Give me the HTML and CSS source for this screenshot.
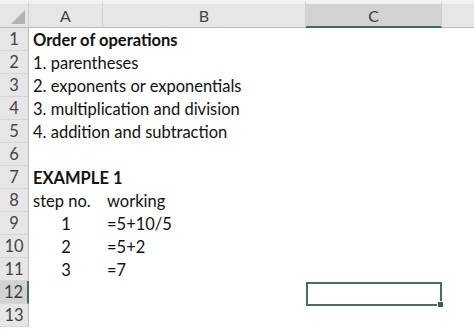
FILE: index.html
```html
<!DOCTYPE html>
<html lang="en">
<head>
    <meta charset="UTF-8">
    <title>Order of operations</title>
    <link rel="stylesheet" href="styles.css">
</head>
<body>
    <div class="sheet">
        <div class="corner"><span class="tri"></span></div>
        <div class="colhead">A</div>
        <div class="colhead">B</div>
        <div class="colhead active">C</div>
        <div class="colhead last"></div>

        <div class="rowhead">1</div><div class="cell bold">Order of operations</div><div class="cell"></div><div class="cell"></div><div class="cell"></div>
        <div class="rowhead">2</div><div class="cell">1. parentheses</div><div class="cell"></div><div class="cell"></div><div class="cell"></div>
        <div class="rowhead">3</div><div class="cell">2. exponents or exponentials</div><div class="cell"></div><div class="cell"></div><div class="cell"></div>
        <div class="rowhead">4</div><div class="cell">3. multiplication and division</div><div class="cell"></div><div class="cell"></div><div class="cell"></div>
        <div class="rowhead">5</div><div class="cell">4. addition and subtraction</div><div class="cell"></div><div class="cell"></div><div class="cell"></div>
        <div class="rowhead">6</div><div class="cell"></div><div class="cell"></div><div class="cell"></div><div class="cell"></div>
        <div class="rowhead">7</div><div class="cell bold">EXAMPLE 1</div><div class="cell"></div><div class="cell"></div><div class="cell"></div>
        <div class="rowhead">8</div><div class="cell">step no.</div><div class="cell">working</div><div class="cell"></div><div class="cell"></div>
        <div class="rowhead">9</div><div class="cell center">1</div><div class="cell">=5+10/5</div><div class="cell"></div><div class="cell"></div>
        <div class="rowhead">10</div><div class="cell center">2</div><div class="cell">=5+2</div><div class="cell"></div><div class="cell"></div>
        <div class="rowhead">11</div><div class="cell center">3</div><div class="cell">=7</div><div class="cell"></div><div class="cell"></div>
        <div class="rowhead active">12</div><div class="cell"></div><div class="cell"></div><div class="cell selected"><span class="handle"></span></div><div class="cell"></div>
        <div class="rowhead">13</div><div class="cell"></div><div class="cell"></div><div class="cell"></div><div class="cell"></div>
    </div>
</body>
</html>
```

FILE: styles.css
```css
body {
    margin: 0;
    background: #fff;
    font-family: Lato, "Liberation Sans", sans-serif;
    overflow: hidden;
}
.sheet {
    display: grid;
    grid-template-columns: 29px 74px 203px 136px 1fr;
    grid-template-rows: 28px repeat(13, 23px);
    width: 474px;
}
.corner, .colhead {
    background: #e6e6e6;
    border-top: 4px solid #f1f1f1;
    border-bottom: 1px solid #bcbcbc;
    box-sizing: border-box;
}
.corner {
    position: relative;
    border-right: 1px solid #d0d0d0;
}
.tri {
    position: absolute;
    right: 3px;
    bottom: 3px;
    width: 0;
    height: 0;
    border-left: 14px solid transparent;
    border-bottom: 14px solid #b4b4b4;
}
.colhead {
    display: flex;
    align-items: center;
    justify-content: center;
    color: #444;
    font-size: 16px;
    border-right: 1px solid #d0d0d0;
}
.colhead.active {
    background: #d2d2d2;
    border-bottom: 2px solid #3f6f5a;
    color: #3c3c3c;
}
.colhead.last {
    border-right: none;
}
.rowhead {
    display: flex;
    align-items: center;
    justify-content: center;
    background: #e6e6e6;
    color: #444;
    font-size: 16.5px;
    border-bottom: 1px solid #d6d6d6;
    border-right: 1px solid #bcbcbc;
    box-sizing: border-box;
}
.rowhead.active {
    background: #d2d2d2;
    border-right: 2px solid #3f6f5a;
    color: #3c3c3c;
}
.cell {
    display: flex;
    align-items: center;
    padding-left: 4px;
    font-size: 16.5px;
    color: #111;
    white-space: nowrap;
    min-width: 0;
}
.bold {
    font-weight: 700;
}
.center {
    justify-content: center;
    padding-left: 0;
}
.selected {
    position: relative;
    border: 2px solid #4a6e5e;
    box-sizing: border-box;
    margin-top: 1px;
    margin-bottom: -2px;
}
.handle {
    position: absolute;
    right: -4px;
    bottom: -4px;
    width: 5px;
    height: 5px;
    background: #3f5f52;
    border: 1px solid #fff;
}
```
